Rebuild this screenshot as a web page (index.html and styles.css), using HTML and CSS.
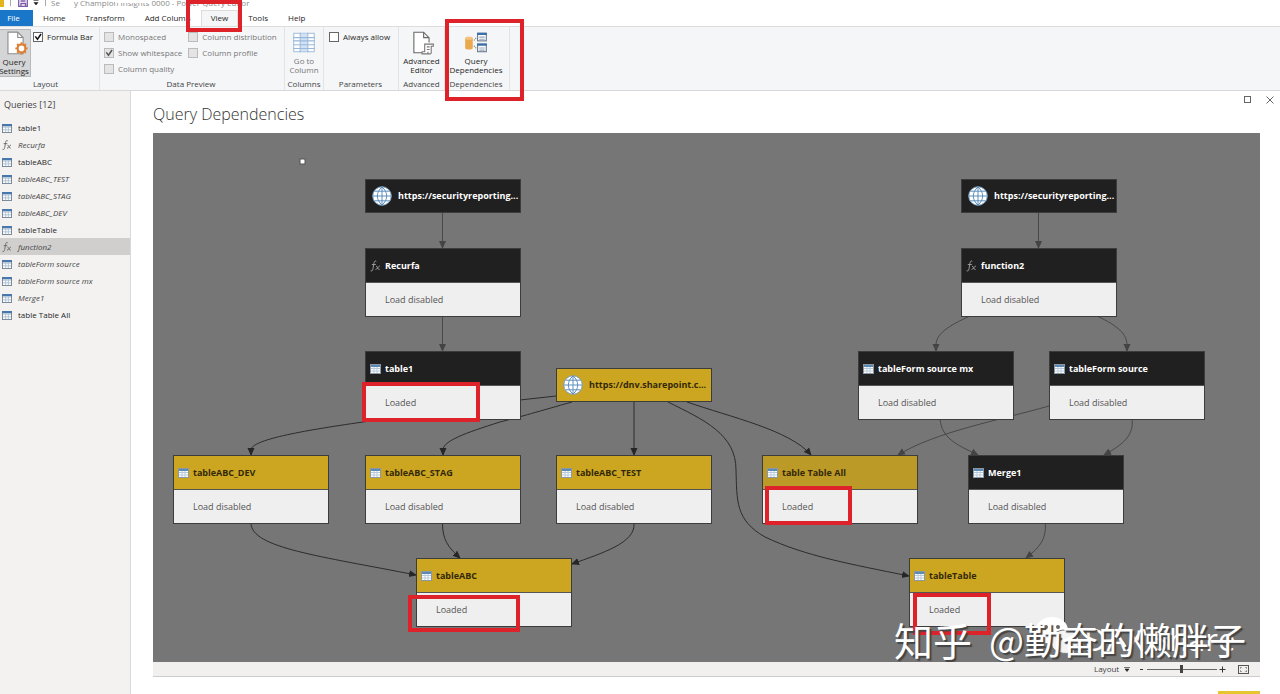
FILE: index.html
```html
<!DOCTYPE html>
<html lang="en">
<head>
<meta charset="utf-8">
<title>Power Query Editor</title>
<link rel="stylesheet" href="styles.css">
</head>
<body>
<svg class="defs" aria-hidden="true">
  <symbol id="table" viewBox="0 0 11 10">
    <rect x="0.5" y="0.5" width="10" height="9" fill="#fff" stroke="#6d7f90"/>
    <path d="M1 3.5H10M1 6.5H10M4 3V9M7 3V9" stroke="#a9bfd2" fill="none"/>
    <rect width="11" height="2.500" fill="#4777ab"/>
  </symbol>
  <symbol id="table-lit" viewBox="0 0 11 10">
    <rect x="0.5" y="0.5" width="10" height="9" fill="#fff" stroke="#8b97a2"/>
    <path d="M1 4.5H10M1 7H10M4 3V9M7 3V9" stroke="#b6c9da" fill="none"/>
    <rect x="1" y="1" width="9" height="2" fill="#5d89b5"/>
  </symbol>
  <symbol id="fx" viewBox="0 0 11 12">
    <path d="M6.300 1.400C5 .3 4.200 1.600 3.900 3.400L3 8.600C2.700 10.700 1.800 11.500 .6 10.700M1.800 4.500H5.800M6 6.200C7.800 5.700 7.300 10 9.600 9.500M9.800 6C8.600 5.800 7 9.800 5.500 9.500" fill="none" stroke="currentColor"/>
  </symbol>
  <symbol id="globe" viewBox="0 0 20 20">
    <circle cx="10" cy="10" r="9.300" fill="#fff" stroke="#7499ba"/>
    <path d="M1 10H19M2.600 5.200H17.400M2.600 14.800H17.400M10 1V19M10 1C3.800 6 3.800 14 10 19M10 1C16.200 6 16.200 14 10 19" fill="none" stroke="#5d8fbd"/>
  </symbol>
</svg>

<header class="titlebar">
  <span class="app-mark"></span><span class="bar"></span>
  <svg class="save" viewBox="0 0 10 7"><path d="M.7 0V6.300H9.300V0M3 6V3.500H7.500V6M2.500 1H7.500" fill="none" stroke="#7b5aa8" stroke-width="1.300"/></svg>
  <svg class="more" viewBox="0 0 6 6"><path d="M.5 .5H5.500M1 2.500H5L3 5Z" fill="#222" stroke="#222" stroke-width=".6"/></svg>
  <span class="bar"></span>
  <span class="doc-a">Se</span><span class="doc-b">y Champion Insights 0000 - Power Query Editor</span>
  <span class="erase"></span>
</header>

<nav class="tabs">
  <button class="tab file">File</button>
  <button class="tab">Home</button>
  <button class="tab">Transform</button>
  <button class="tab">Add Column</button>
  <button class="tab active">View</button>
  <button class="tab">Tools</button>
  <button class="tab">Help</button>
  <span class="mark mark-view"></span>
</nav>

<section class="ribbon">
  <div class="group g-layout">
    <div class="tools">
      <button class="big pressed">
        <svg viewBox="0 0 24 24"><path d="M5.500 1.500H14.500L19.500 6.500V21.500H5.500Z" fill="#fff" stroke="#8c8c8c"/><path d="M14.500 1.500V6.500H19.500" fill="none" stroke="#8c8c8c"/><circle cx="18" cy="16.500" r="3.600" fill="#fff" stroke="#dd7f35" stroke-width="2"/><path d="M18 10.800V13M18 20V22.200M12.300 16.500H14.500M21.500 16.500H23.700M14 12.500L15.600 14.100M22 12.500L20.400 14.100M14 20.500L15.600 18.900M22 20.500L20.400 18.900" stroke="#dd7f35" stroke-width="1.800"/></svg>
        <span>Query<br>Settings</span>
      </button>
      <div class="checks"><label><input type="checkbox" checked>Formula Bar</label></div>
    </div>
    <div class="caption">Layout</div>
  </div>
  <div class="group g-preview">
    <div class="tools">
      <div class="checks">
        <label class="off"><input type="checkbox" disabled>Monospaced</label>
        <label class="off"><input type="checkbox" checked disabled>Show whitespace</label>
        <label class="off"><input type="checkbox" disabled>Column quality</label>
      </div>
      <div class="checks">
        <label class="off"><input type="checkbox" disabled>Column distribution</label>
        <label class="off"><input type="checkbox" disabled>Column profile</label>
      </div>
    </div>
    <div class="caption">Data Preview</div>
  </div>
  <div class="group g-columns">
    <div class="tools">
      <button class="big off" disabled>
        <svg viewBox="0 0 24 24"><rect x="2.500" y="3.500" width="19" height="17" fill="#fff" stroke="#a9c1df"/><rect x="9" y="4" width="6" height="16" fill="#d3e2f3"/><path d="M2 7.500H22M2 10.500H22M2 14H22M2 17.500H22M8.500 3V21M15.500 3V21" stroke="#98b7dc" fill="none"/></svg>
        <span>Go to<br>Column</span>
      </button>
    </div>
    <div class="caption">Columns</div>
  </div>
  <div class="group g-params">
    <div class="tools"><div class="checks"><label><input type="checkbox">Always allow</label></div></div>
    <div class="caption">Parameters</div>
  </div>
  <div class="group g-advanced">
    <div class="tools">
      <button class="big">
        <svg viewBox="0 0 24 24"><path d="M13 21.500H4.500V2.500H13.500L18.500 7.500V12M13.500 2.500V7.500H18.500" fill="#fff" stroke="#666"/><path d="M14.500 13.500H22.500V15.500H20.500V21.500Q20.500 22.500 19.500 22.500H12V20.500H14.500ZM16.500 16H19M16.500 18.500H19M17.500 20.500V22.500" fill="#fff" stroke="#777"/></svg>
        <span>Advanced<br>Editor</span>
      </button>
    </div>
    <div class="caption">Advanced</div>
  </div>
  <div class="group g-deps">
    <div class="tools">
      <button class="big">
        <svg viewBox="0 0 24 24"><path d="M2 8V17C2 19 9 19 9 17V8Z" fill="#eaa94f"/><ellipse cx="5.500" cy="8" rx="3.500" ry="1.500" fill="#f3c47e"/><path d="M10 10L13 7M10 15L13 18" stroke="#777" stroke-dasharray="1 1"/><rect x="13.500" y="3.500" width="8" height="7" fill="#fff" stroke="#667789"/><rect x="13.500" y="13.500" width="8" height="7" fill="#fff" stroke="#667789"/><path d="M13 4H22M13 14H22" stroke="#3b70aa" stroke-width="2"/><path d="M15 7H20M15 9H20M15 17H20M15 19H20" stroke="#94a8ba"/></svg>
        <span>Query<br>Dependencies</span>
      </button>
    </div>
    <div class="caption">Dependencies</div>
    <span class="mark mark-deps"></span>
  </div>
</section>

<main class="work">
  <aside class="queries">
    <h2>Queries [12]</h2>
    <ul>
      <li><svg><use href="#table"/></svg>table1</li>
      <li class="it"><svg class="f"><use href="#fx"/></svg>Recurfa</li>
      <li><svg><use href="#table"/></svg>tableABC</li>
      <li class="it"><svg><use href="#table"/></svg>tableABC_TEST</li>
      <li class="it"><svg><use href="#table"/></svg>tableABC_STAG</li>
      <li class="it"><svg><use href="#table"/></svg>tableABC_DEV</li>
      <li><svg><use href="#table"/></svg>tableTable</li>
      <li class="it sel"><svg class="f"><use href="#fx"/></svg>function2</li>
      <li class="it"><svg><use href="#table"/></svg>tableForm source</li>
      <li class="it"><svg><use href="#table"/></svg>tableForm source mx</li>
      <li class="it"><svg><use href="#table"/></svg>Merge1</li>
      <li><svg><use href="#table"/></svg>table Table All</li>
    </ul>
  </aside>

  <section class="dialog">
    <div class="window-buttons">
      <button aria-label="Maximize"><svg viewBox="0 0 8 8"><rect x=".5" y=".5" width="6" height="6" fill="none" stroke="#666"/></svg></button>
      <button aria-label="Close"><svg viewBox="0 0 8 8"><path d="M.5 .5L7.500 7.500M7.500 .5L.5 7.500" stroke="#666"/></svg></button>
    </div>
    <h1>Query Dependencies</h1>
    <div class="canvas">
      <svg class="edges" viewBox="153 133 1107 529">
        <defs>
          <marker id="tip-dark" markerUnits="userSpaceOnUse" markerWidth="8" markerHeight="8" refX="7" refY="4" orient="auto"><path d="M0 .5L8 4L0 7.500Z" fill="#262626"/></marker>
          <marker id="tip-soft" markerUnits="userSpaceOnUse" markerWidth="8" markerHeight="8" refX="7" refY="4" orient="auto"><path d="M0 .5L8 4L0 7.500Z" fill="#444"/></marker>
        </defs>
        <g class="soft">
          <path d="M442.500 212V248"/><path d="M442.500 316V351"/><path d="M1038.500 212V248"/>
          <path d="M970 316C948 326 936 334 936 345V351"/>
          <path d="M1097 316C1118 326 1127 334 1127 345V351"/>
          <path d="M940 419C942 438 955 444 978 455"/>
          <path d="M1132 419C1134 435 1124 444 1104 455"/>
          <path d="M1049 406C1000 420 935 432 898 455"/>
          <path d="M1045.500 523C1046 540 1040 547 1026 558"/>
        </g>
        <g class="dark">
          <path d="M556 396L520 400C450 410 400 417 363 422C300 431 251 440 251 450V455"/>
          <path d="M572 402C540 411 520 417 500 422C465 433 443 441 443 450V455"/>
          <path d="M634 402V455"/>
          <path d="M687 402C730 417 790 430 811 455"/>
          <path d="M668 402C704 420 736 434 736 470C737 500 735 520 765 537C805 556 850 564 909 576"/>
          <path d="M251 523C251 548 320 556 416 575"/>
          <path d="M442.500 523C442.500 540 448 547 460 558"/>
          <path d="M634 523C636 543 602 553 572 564"/>
        </g>
        <rect x="300" y="159" width="5" height="5" fill="#fff" stroke="#555"/>
      </svg>

      <article class="node source" style="left:212px;top:46px"><h3><svg><use href="#globe"/></svg>https://securityreporting...</h3></article>
      <article class="node" style="left:212px;top:115px"><h3><svg class="f"><use href="#fx"/></svg>Recurfa</h3><p>Load disabled</p></article>
      <article class="node" style="left:212px;top:218px"><h3><svg><use href="#table-lit"/></svg>table1</h3><p>Loaded</p></article>
      <article class="node source gold" style="left:403px;top:235px"><h3><svg><use href="#globe"/></svg>https://dnv.sharepoint.c...</h3></article>
      <article class="node gold" style="left:20px;top:322px"><h3><svg><use href="#table-lit"/></svg>tableABC_DEV</h3><p>Load disabled</p></article>
      <article class="node gold" style="left:212px;top:322px"><h3><svg><use href="#table-lit"/></svg>tableABC_STAG</h3><p>Load disabled</p></article>
      <article class="node gold" style="left:403px;top:322px"><h3><svg><use href="#table-lit"/></svg>tableABC_TEST</h3><p>Load disabled</p></article>
      <article class="node gold dim" style="left:609px;top:322px"><h3><svg><use href="#table-lit"/></svg>table Table All</h3><p>Loaded</p></article>
      <article class="node gold" style="left:263px;top:425px"><h3><svg><use href="#table-lit"/></svg>tableABC</h3><p>Loaded</p></article>
      <article class="node source" style="left:808px;top:46px"><h3><svg><use href="#globe"/></svg>https://securityreporting...</h3></article>
      <article class="node" style="left:808px;top:115px"><h3><svg class="f"><use href="#fx"/></svg>function2</h3><p>Load disabled</p></article>
      <article class="node" style="left:705px;top:218px"><h3><svg><use href="#table-lit"/></svg>tableForm source mx</h3><p>Load disabled</p></article>
      <article class="node" style="left:896px;top:218px"><h3><svg><use href="#table-lit"/></svg>tableForm source</h3><p>Load disabled</p></article>
      <article class="node" style="left:815px;top:322px"><h3><svg><use href="#table-lit"/></svg>Merge1</h3><p>Load disabled</p></article>
      <article class="node gold" style="left:756px;top:425px"><h3><svg><use href="#table-lit"/></svg>tableTable</h3><p>Loaded</p></article>

      <span class="mark mark-table1"></span>
      <span class="mark mark-abc"></span>
      <span class="mark mark-all"></span>
      <span class="mark mark-tt"></span>

      <div class="channel">
        <svg viewBox="0 0 46 40"><path d="M17 1C8 1 1 7 1 14C1 19 4 22 7 25L5 30L11 27C23 30 33 23 33 14C33 7 26 1 17 1Z" fill="#fff"/><path d="M30 14C22 14 16 19 16 26C16 34 25 39 35 37L41 40L39 35C47 29 46 14 30 14Z" fill="#f4f4f4" stroke="#777"/><g fill="#666"><circle cx="11" cy="11" r="2"/><circle cx="23" cy="11" r="2"/><circle cx="26" cy="23" r="1.500"/><circle cx="35" cy="23" r="1.500"/></g></svg>
        <span>DAX Share</span>
      </div>
      <div class="watermark" lang="zh-CN"><b>知乎</b><span>@勤奋的懒胖子</span></div>
    </div>
    <div class="statusbar">
      <label class="layout"><select aria-label="Layout"><option>Layout</option></select><svg viewBox="0 0 6 5"><path d="M0 .5H6M1 2H5L3 4.500Z" fill="#222" stroke="#222" stroke-width=".6"/></svg></label>
      <button class="sign" aria-label="Zoom out"><svg viewBox="0 0 7 7"><path d="M2 3.500H5" stroke="#333"/></svg></button>
      <input class="zoom" type="range" min="0" max="100" value="49" aria-label="Zoom">
      <button class="sign" aria-label="Zoom in"><svg viewBox="0 0 7 7"><path d="M.5 3.500H6.500M3.500 .5V6.500" stroke="#333"/></svg></button>
      <button class="fit" aria-label="Fit to screen"><svg viewBox="0 0 11 9"><rect x=".5" y=".5" width="10" height="8" fill="none" stroke="#555"/><path d="M2.500 3.500V2.500H3.500M7.500 2.500H8.500V3.500M8.500 5.500V6.500H7.500M3.500 6.500H2.500V5.500" fill="none" stroke="#666"/></svg></button>
    </div>
    <button class="close-strip" aria-label="Close dialog"></button>
  </section>
</main>
</body>
</html>
```
FILE: styles.css
```css
* { box-sizing: border-box; }
body {
  margin: 0;
  min-height: 100vh;
  display: flex;
  flex-direction: column;
  font: 8px/10px "Open Sans", "Noto Sans", sans-serif;
  color: #262626;
  background: #fff;
}
button { font: inherit; color: inherit; background: none; border: 0; padding: 0; }
h1, h2, h3, p, ul { margin: 0; padding: 0; font-weight: 400; }
svg { display: block; flex: none; }
.defs { position: absolute; width: 0; height: 0; }

.titlebar {
  position: relative;
  display: flex;
  align-items: flex-start;
  height: 10px;
  overflow: hidden;
  color: #8a8a8a;
  font-size: 8px;
  line-height: 5px;
}
.app-mark { width: 4px; height: 7px; background: #e3b51c; }
.bar { width: 1px; height: 6px; margin-left: 6px; background: #aaa; }
.save { width: 10px; height: 7px; margin-left: 7px; }
.more { width: 6px; height: 6px; margin-left: 5px; }
.bar + .doc-a { margin-left: 5px; }
.doc-b { margin-left: 14px; }
.erase { position: absolute; left: 115px; top: 0; width: 36px; height: 3px; background: #fff; }

.tabs { position: relative; display: flex; height: 16px; }
.tab { padding: 0 9px 1px; border: 1px solid transparent; border-bottom: 0; }
.file { width: 33px; padding: 0 6px 1px 0; background: #1976c8; color: #fff; }
.active { background: #f5f6f7; border-color: #ddd; }

.ribbon {
  display: flex;
  height: 65px;
  background: #f5f6f7;
  border-top: 1px solid #dcdddf;
  border-bottom: 1px solid #d8d8d8;
}
.group { position: relative; display: flex; flex-direction: column; border-right: 1px solid #e2e3e4; }
.tools { display: flex; flex: 1; gap: 2px; }
.g-layout { width: 100px; }
.g-preview { width: 185px; padding-left: 4px; }
.g-preview .tools { gap: 6px; }
.g-columns { width: 39px; }
.g-params { width: 75px; padding-left: 5px; }
.g-advanced { width: 46px; }
.g-deps { width: 65px; }
.g-columns .tools, .g-advanced .tools { justify-content: center; }
.g-deps .caption, .g-deps .tools { width: 62px; justify-content: center; }
.caption { height: 11px; text-align: center; color: #444; white-space: nowrap; }
.g-layout .caption { padding-right: 8px; }
.g-preview .caption, .g-params .caption { padding-right: 6px; }
.big { display: flex; flex-direction: column; align-items: center; height: 48px; margin-top: 2px; line-height: 9px; white-space: nowrap; }
.big svg { width: 26px; height: 27px; }
.big span { display: block; }
.pressed { width: 31px; background: #d4d5d6; border: 1px solid #b8b9ba; border-left: 0; }
.pressed span { margin-left: -2px; }
.checks { padding-top: 2px; }
.checks label { display: flex; align-items: center; gap: 4px; height: 16px; white-space: nowrap; }
.off { color: #777; }
input[type="checkbox"] {
  appearance: none;
  width: 10px;
  height: 10px;
  margin: 0;
  border: 1px solid #666;
  background: #fff;
}
.off input[type="checkbox"] { border-color: #bbb; background: #e4e4e4; }
input[type="checkbox"]:checked::before {
  content: "";
  display: block;
  width: 8px;
  height: 8px;
  background: #111;
  clip-path: polygon(8% 48%, 24% 36%, 42% 62%, 80% 6%, 96% 18%, 44% 94%);
}
.off input[type="checkbox"]:checked::before { background: #555; }

.mark { position: absolute; border: 4px solid #de2229; pointer-events: none; z-index: 3; }
.mark-view { left: 186px; top: -10px; width: 56px; height: 32px; }
.mark-deps { left: 0; top: -8px; width: 79px; height: 82px; }
.mark-table1 { left: 209px; top: 249px; width: 118px; height: 40px; }
.mark-abc { left: 255px; top: 462px; width: 112px; height: 37px; }
.mark-all { left: 612px; top: 353px; width: 87px; height: 39px; }
.mark-tt { left: 760px; top: 460px; width: 78px; height: 42px; }

.work { display: flex; flex: 1; }
.queries { width: 131px; flex: none; background: #f3f2f1; border-right: 1px solid #d9d9d9; }
.queries h2 { height: 28px; padding: 8px 4px 0; font-size: 9px; line-height: 12px; color: #444; }
.queries ul { list-style: none; }
.queries li { display: flex; align-items: center; gap: 6px; height: 17px; padding: 1px 0 0 2px; line-height: 12px; }
.queries svg { width: 10px; height: 9px; color: #666; }
.queries svg.f { height: 12px; }
.it { font-style: italic; color: #444; }
.queries .sel { background: #d0cfce; }

.dialog { position: relative; display: flex; flex-direction: column; flex: 1; padding: 0 20px 0 22px; }
.dialog h1 { height: 42px; padding-top: 12px; font-size: 16px; line-height: 22px; font-weight: 300; color: #333; }
.window-buttons { position: absolute; right: 6px; top: 5px; display: flex; gap: 14px; }
.window-buttons svg { width: 8px; height: 8px; }
.canvas { position: relative; flex: 1; min-height: 528px; background: #767676; overflow: hidden; }
.edges { position: absolute; left: 0; top: 0; width: 1107px; height: 529px; }
.edges g { fill: none; }
.soft { stroke: #484848; }
.dark { stroke: #2c2c2c; }
.soft path { marker-end: url(#tip-soft); }
.dark path { marker-end: url(#tip-dark); }
.edges marker path { marker-end: none; stroke: none; }

.node { position: absolute; width: 156px; border: 1px solid #3c3c3c; background: #efefef; white-space: nowrap; }
.node h3 {
  display: flex;
  align-items: center;
  gap: 4px;
  height: 33px;
  padding-left: 4px;
  background: #202020;
  color: #fff;
  font-size: 9px;
  font-weight: 700;
}
.node h3 svg { width: 11px; height: 10px; }
.node h3 svg.f { height: 12px; color: #999; }
.node p { height: 34px; padding-left: 19px; border-top: 1px solid #555; font-size: 9px; line-height: 34px; color: #555; }
.node.source h3 { height: 32px; gap: 6px; padding-left: 6px; }
.node.source h3 svg { width: 20px; height: 20px; }
.gold h3 { background: #cca620; color: #33290a; }
.dim h3 { background: #bc9a27; }

.channel { position: absolute; left: 882px; top: 483px; display: flex; gap: 3px; color: #fff; font-size: 31px; line-height: 46px; white-space: nowrap; }
.channel svg { width: 46px; height: 40px; }
.watermark {
  position: absolute;
  left: 741px;
  top: 481px;
  z-index: 4;
  display: flex;
  gap: 17px;
  align-items: center;
  color: #fff;
  font: 37px/50px "Noto Sans CJK SC", sans-serif;
  text-shadow: 2px 2px 1px #444;
  white-space: nowrap;
}
.watermark b { font-size: 39px; font-weight: 400; }

.statusbar { display: flex; align-items: center; justify-content: flex-end; height: 15px; padding-right: 11px; background: #f1f0ef; border-bottom: 1px solid #ccc; }
.layout { display: flex; align-items: center; gap: 4px; margin-right: 8px; }
.layout select { appearance: none; border: 0; padding: 0; margin: 0; background: none; font: inherit; color: #444; }
.layout svg { width: 6px; height: 5px; }
.sign svg { width: 7px; height: 7px; }
.zoom { appearance: none; width: 70px; height: 9px; margin: 0 2px; background: linear-gradient(#666, #666) center / 100% 1px no-repeat; }
.zoom::-webkit-slider-thumb { appearance: none; width: 3px; height: 8px; background: #444; }
.fit { margin-left: 12px; }
.fit svg { width: 11px; height: 9px; }
.close-strip { align-self: flex-end; width: 42px; height: 3px; margin-top: 14px; background: #e5c62c; }
```
